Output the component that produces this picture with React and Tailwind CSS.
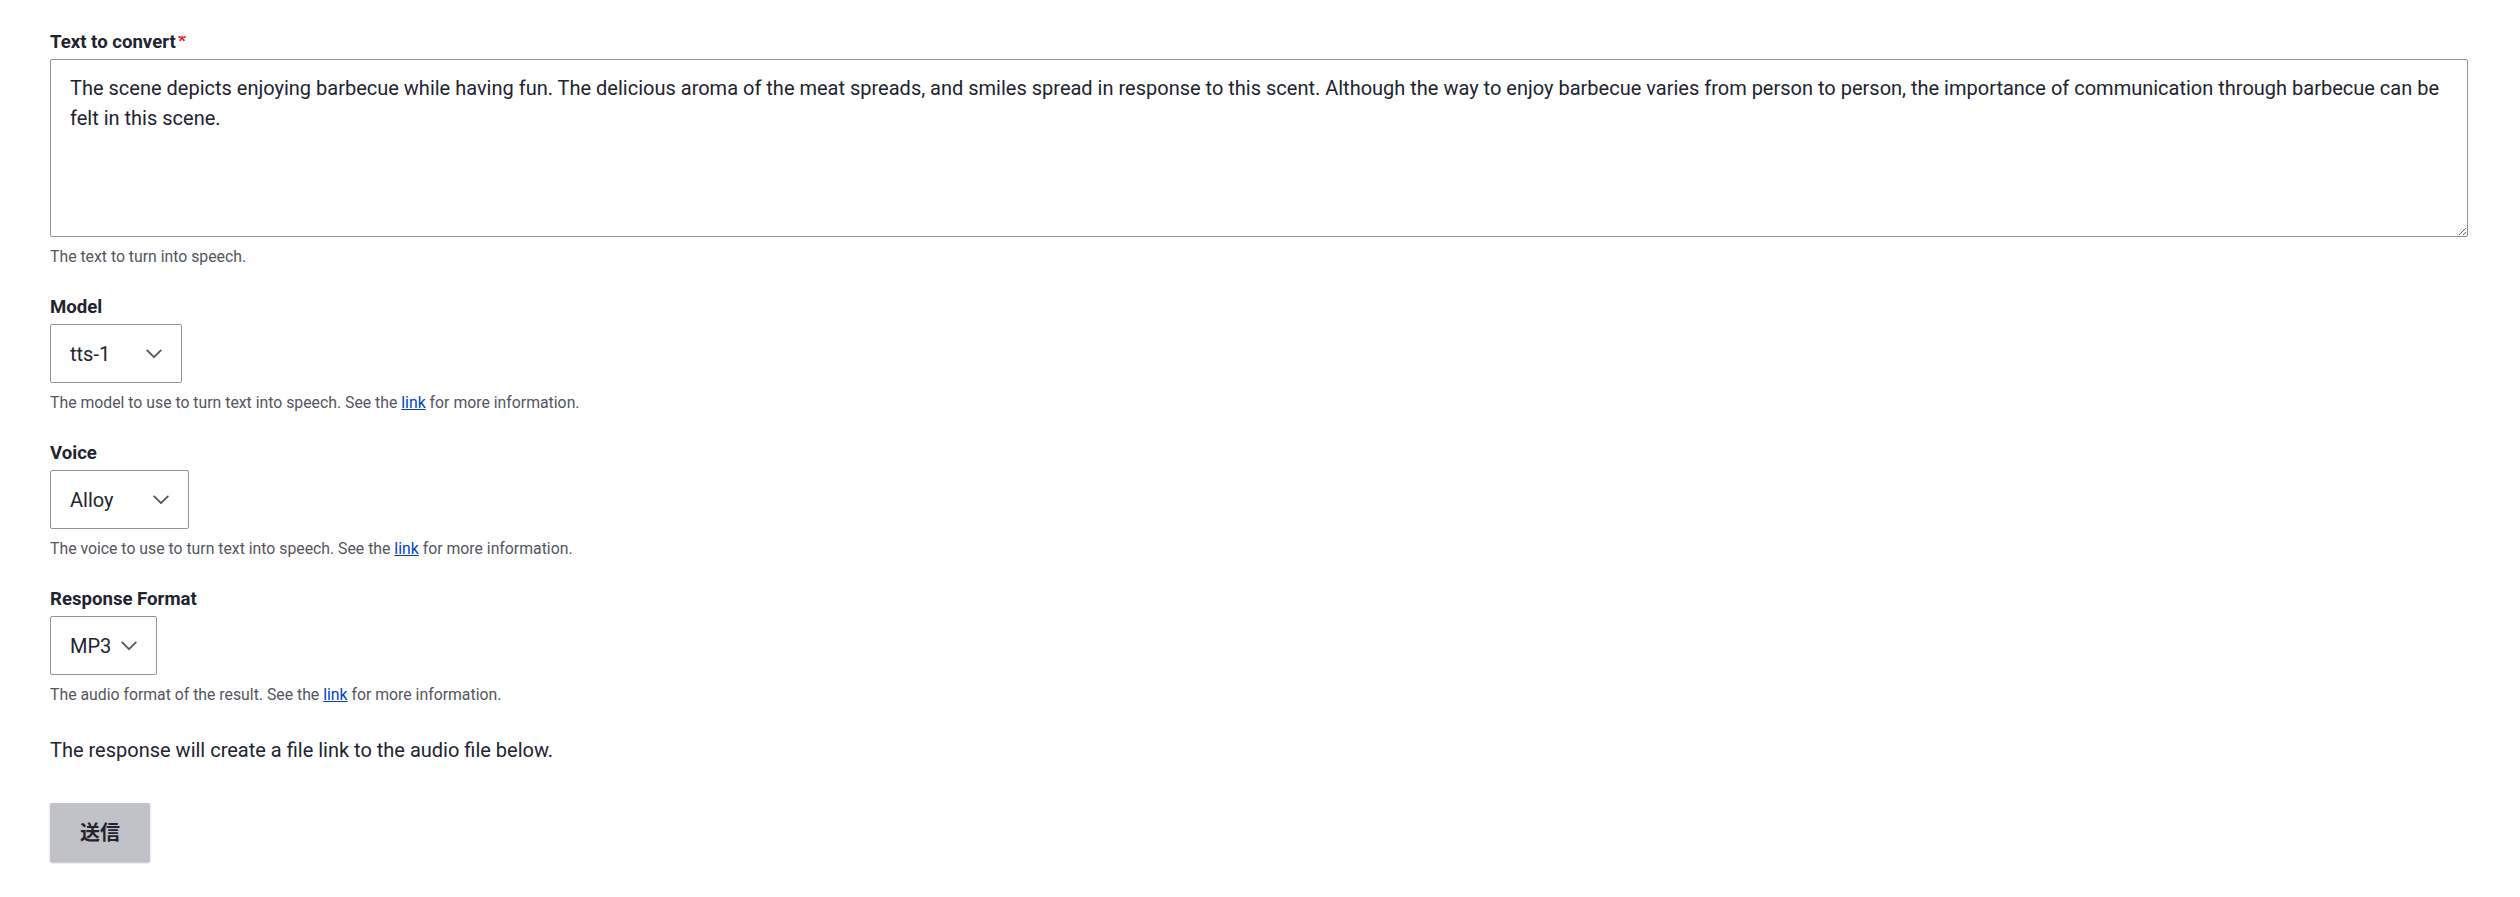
import React from 'react';

const longText =
  'The scene depicts enjoying barbecue while having fun. The delicious aroma of the meat spreads, and smiles spread in response to this scent. Although the way to enjoy barbecue varies from person to person, the importance of communication through barbecue can be felt in this scene.';

const Chevron = () => (
  <svg width="16" height="10" viewBox="0 0 16 10" fill="none" className="pointer-events-none absolute right-[20px] top-1/2 -translate-y-1/2">
    <path d="M1.2 1.4 8 8.2l6.8-6.8" stroke="#545560" strokeWidth="1.8" strokeLinecap="round" strokeLinejoin="round" />
  </svg>
);

const Required = () => (
  <svg width="8" height="8" viewBox="0 0 7 7" className="ml-[2px] mt-[3px] self-start">
    <path
      fill="#dc2323"
      d="M3.5 0 4 2.6 6.4 1.5 6.9 3.2 4.4 3.5 6.2 5.5 4.8 6.6 3.5 4.3 2.2 6.6 0.8 5.5 2.6 3.5 0.1 3.2 0.6 1.5 3 2.6z"
    />
  </svg>
);

const Label = ({ children, required }) => (
  <label className="flex h-[22px] items-center text-[18.6px] font-bold leading-[22px] text-[#222330] mb-[6px]">
    {children}
    {required && <Required />}
  </label>
);

const Description = ({ children }) => (
  <div className="mt-[9px] h-[21px] text-[15.8px] leading-[21px] text-[#545560]">{children}</div>
);

const DocLink = () => (
  <a href="#" className="text-[#003ecc] underline">
    link
  </a>
);

const Select = ({ width, value, options }) => (
  <div className={`relative ${width}`}>
    <select
      defaultValue={value}
      className="h-[59px] w-full appearance-none rounded-[2px] border border-[#8e929c] bg-white pl-[19px] pr-[40px] text-[20px] leading-[30px] text-[#222330] outline-none"
    >
      {options.map((o) => (
        <option key={o} value={o}>
          {o}
        </option>
      ))}
    </select>
    <Chevron />
  </div>
);

export default function App() {
  return (
    <div className="min-h-screen bg-white pl-[50px] pr-[52px] pt-[31px] font-[Roboto,sans-serif] text-[#222330]">
      {/* Text to convert */}
      <div>
        <Label required>Text to convert</Label>
        <textarea
          defaultValue={longText}
          className="block h-[178px] w-full rounded-[2px] border border-[#8e929c] bg-white px-[19px] pt-[13px] pb-[14px] text-[20px] leading-[30px] text-[#222330] outline-none"
        />
        <Description>The text to turn into speech.</Description>
      </div>

      {/* Model */}
      <div className="mt-[29px]">
        <Label>Model</Label>
        <Select width="w-[132px]" value="tts-1" options={['tts-1', 'tts-1-hd']} />
        <Description>
          The model to use to turn text into speech. See the <DocLink /> for more information.
        </Description>
      </div>

      {/* Voice */}
      <div className="mt-[29px]">
        <Label>Voice</Label>
        <Select width="w-[139px]" value="Alloy" options={['Alloy', 'Echo', 'Fable', 'Onyx', 'Nova', 'Shimmer']} />
        <Description>
          The voice to use to turn text into speech. See the <DocLink /> for more information.
        </Description>
      </div>

      {/* Response Format */}
      <div className="mt-[29px]">
        <Label>Response Format</Label>
        <Select width="w-[107px]" value="MP3" options={['MP3', 'Opus', 'AAC', 'FLAC']} />
        <Description>
          The audio format of the result. See the <DocLink /> for more information.
        </Description>
      </div>

      <p className="mt-[30px] text-[20px] leading-[30px]">The response will create a file link to the audio file below.</p>

      <button
        type="button"
        className="mt-[38px] flex h-[59px] w-[100px] items-center justify-center rounded-[2px] bg-[#c1c2c8] font-['Roboto','Noto_Sans_CJK_JP',sans-serif] text-[20px] font-bold text-[#222330] shadow-[0_1px_2px_rgba(0,0,0,0.25)]"
      >
        送信
      </button>
    </div>
  );
}
